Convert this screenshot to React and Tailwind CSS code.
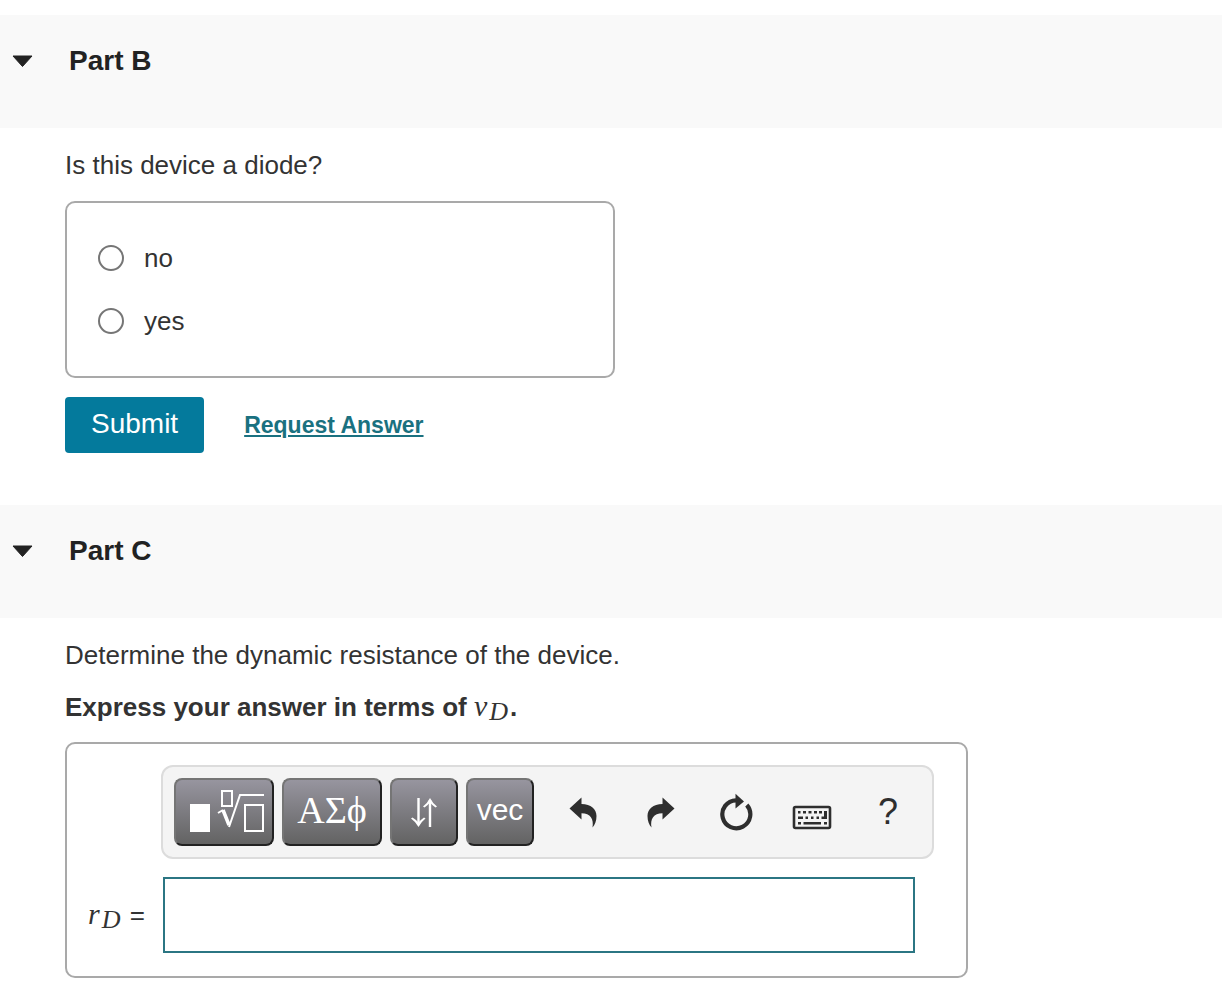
import React from "react";

function PartHeader({ title }) {
  return (
    <h2 className="bg-[#f9f9f9] pt-[26px] pb-[47px]">
      <button type="button" aria-expanded="true" className="flex items-center pl-3 text-[28px] leading-10 font-bold text-[#222]">
        <svg width="21" height="13" viewBox="0 0 21 13" className="mr-9" aria-hidden="true">
          <path d="M1 1H20L10.500 11.500Z" fill="#222" stroke="#222" strokeLinejoin="round" />
        </svg>
        {title}
      </button>
    </h2>
  );
}

function MathSymbol({ base, sub }) {
  return (
    <span className="pr-0.5 font-['Liberation_Serif',serif] text-[30px] leading-none font-normal italic">
      {base}
      <span className="relative top-1 ml-0.5 text-[26px]">{sub}</span>
    </span>
  );
}

function Choice({ label }) {
  return (
    <label className="flex items-center gap-5 leading-8">
      <input type="radio" name="diode" value={label} className="size-[26px] appearance-none rounded-full border-2 border-[#767676] bg-white checked:border-8 checked:border-[#047a9c]" />
      {label}
    </label>
  );
}

const keyClass =
  "flex h-[68px] items-center justify-center rounded-lg border-2 border-t-[#757575] border-l-[#757575] border-r-[#222] border-b-[#222] bg-linear-to-b from-[#97959f] to-[#636363] text-white";
const toolClass = "flex h-[68px] w-[60px] items-center justify-center text-[#2e2e2e]";

function TemplateIcon() {
  return (
    <svg width="80" height="48" viewBox="-4 0 80 48" fill="none" stroke="white" strokeWidth="2" aria-hidden="true">
      <path d="M2 16H22V44H2Z" fill="white" stroke="none" />
      <path d="M34 3H44V18H34Z" />
      <path d="M57 17H75V43H57Z" />
      <path d="M30 25L35 22" />
      <path d="M35 22L41 37" strokeWidth="3.500" />
      <path d="M41 39L52 7H76" />
    </svg>
  );
}

function ArrowsIcon() {
  return (
    <svg width="28" height="32" viewBox="0 0 28 32" fill="none" stroke="white" strokeWidth="2.400" aria-hidden="true">
      <path d="M8.500 2V29M20 31V4" />
      <path d="M1 22.500L2.500 21.500Q6.500 24 8.500 26.500Q10.500 24 14 21.500L15.500 22.500Q11 26 8.500 31Q6 26 1 22.500ZM13 10.500L14.500 11.500Q18 9 20 6.500Q22 9 25.500 11.500L27 10.500Q22.500 7 20 2Q17.500 7 13 10.500Z" fill="white" stroke="none" />
    </svg>
  );
}

function TurnArrow({ flipped }) {
  return (
    <svg width="32" height="32" viewBox="0 0 32 32" className={flipped ? "-scale-x-100" : ""} aria-hidden="true">
      <path d="M1.500 12.500L13.500 1.500V8C23 8 28.500 13 28.500 20C28.500 25 27 28.500 24.500 31.500C26 23 22.500 17.300 13.500 17.300V23.500Z" fill="currentColor" />
    </svg>
  );
}

function ResetIcon() {
  return (
    <svg width="36" height="38" viewBox="0 0 36 38" aria-hidden="true">
      <path d="M28.800 12A14 14 0 1 1 18 7.300" fill="none" stroke="currentColor" strokeWidth="4.200" />
      <path d="M17.500 0.800L26 8.500L17.500 15.500Z" fill="currentColor" />
    </svg>
  );
}

function KeyboardIcon() {
  return (
    <svg width="40" height="36" viewBox="0 0 40 36" aria-hidden="true">
      <rect x="2" y="13" width="36" height="21" rx="1.500" fill="none" stroke="currentColor" strokeWidth="2.600" />
      <path
        d="M6 17H8.500V19.500H6ZM11 17H14V19.500H11ZM16.500 17H19.500V19.500H16.500ZM22 17H25V19.500H22ZM27 17H30V19.500H27ZM32 17H35V25H29.500V22.500H32ZM6 22.500H11V25H6ZM13.500 22.500H16V25H13.500ZM19 22.500H21.500V25H19ZM24.500 22.500H27V25H24.500ZM6 28H9V30.500H6ZM11.500 28H29V30.500H11.500ZM32 28H35V30.500H32Z"
        fill="currentColor"
      />
    </svg>
  );
}

export default function App() {
  return (
    <main className="bg-white pt-[15px] pb-1.5 font-['Liberation_Sans',Arial,sans-serif] text-[26px] leading-8 text-[#333]">
      <section>
        <PartHeader title="Part B" />
        <form className="px-[65px] pt-[21px] pb-[52px]" onSubmit={(e) => e.preventDefault()}>
          <fieldset>
            <legend>Is this device a diode?</legend>
            <div className="mt-5 flex max-w-[550px] flex-col gap-[31px] rounded-[10px] border-2 border-[#a9a9a9] px-[31px] py-[39px]">
              <Choice label="no" />
              <Choice label="yes" />
            </div>
          </fieldset>
          <div className="mt-[19px] flex items-center gap-10">
            <button type="submit" className="rounded bg-[#047a9c] px-[26px] pt-[11px] pb-[13px] text-[28px] leading-8 text-white">
              Submit
            </button>
            <a href="#answer" className="text-[23px] font-bold text-[#1a7180] underline decoration-2 underline-offset-2">
              Request Answer
            </a>
          </div>
        </form>
      </section>

      <section>
        <PartHeader title="Part C" />
        <div className="px-[65px] pt-[21px]">
          <p>Determine the dynamic resistance of the device.</p>
          <p className="mt-5 font-bold">
            Express your answer in terms of <MathSymbol base="v" sub="D" />.
          </p>
          <div className="mt-[19px] max-w-[903px] rounded-[10px] border-2 border-[#a9a9a9] pt-[21px] pb-[23px]">
            <div role="toolbar" aria-label="Equation tools" className="mr-8 ml-[94px] flex items-center gap-2 rounded-xl border-2 border-[#dcdcdc] bg-[#f4f4f4] px-[11px] py-[11px]">
              <button type="button" aria-label="Templates" className={`${keyClass} w-[100px]`}>
                <TemplateIcon />
              </button>
              <button type="button" aria-label="Greek letters" className={`${keyClass} w-[100px] pb-1 font-['Liberation_Serif',serif] text-[38px] leading-10`}>
                ΑΣϕ
              </button>
              <button type="button" aria-label="Arrows" className={`${keyClass} w-[68px]`}>
                <ArrowsIcon />
              </button>
              <button type="button" className={`${keyClass} w-[68px] pb-1 text-[30px]`}>
                vec
              </button>
              <div className="ml-3 flex gap-4">
                <button type="button" aria-label="Undo" className={toolClass}>
                  <TurnArrow />
                </button>
                <button type="button" aria-label="Redo" className={toolClass}>
                  <TurnArrow flipped />
                </button>
                <button type="button" aria-label="Reset" className={toolClass}>
                  <ResetIcon />
                </button>
                <button type="button" aria-label="Keyboard shortcuts" className={toolClass}>
                  <KeyboardIcon />
                </button>
                <button type="button" aria-label="Help" className={`${toolClass} text-[36px]`}>
                  ?
                </button>
              </div>
            </div>
            <div className="mt-[18px] mr-[51px] ml-[21px] flex items-center">
              <label htmlFor="resistance" className="w-[75px] shrink-0 whitespace-nowrap">
                <MathSymbol base="r" sub="D" /> =
              </label>
              <input id="resistance" type="text" className="h-[76px] min-w-0 flex-1 border-2 border-[#2b7683] bg-white px-3 outline-none" />
            </div>
          </div>
        </div>
      </section>
    </main>
  );
}
